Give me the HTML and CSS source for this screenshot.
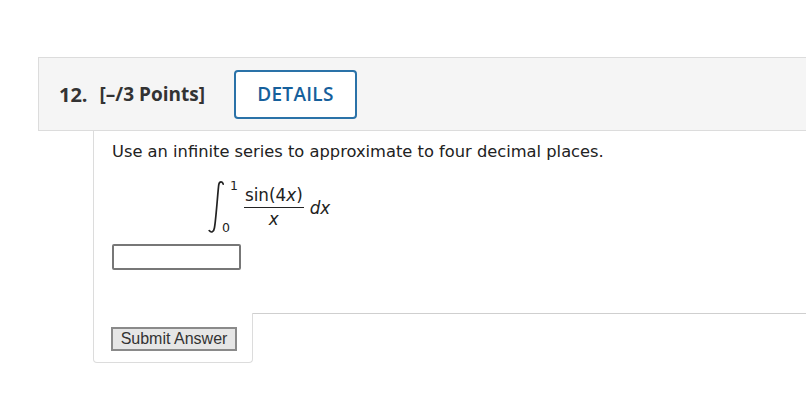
FILE: index.html
```html
<!DOCTYPE html>
<html>
<head>
<meta charset="utf-8">
<link rel="stylesheet" href="styles.css">
</head>
<body>
<div class="page">
  <div class="q-header">
    <span class="q-num">12.</span>
    <span class="q-points">[–/3 Points]</span>
    <button class="details">DETAILS</button>
  </div>
  <div class="q-body">
    <p class="prompt">Use an infinite series to approximate to four decimal places.</p>
    <div class="math">
      <svg class="intsign" width="16" height="54" viewBox="0 0 16 54"><path d="M15.2 4.2 C14.6 1.2 11.6 1 10.8 4.5 C10 9 8 40 6.4 48 C5.8 52 3.2 53.2 1.2 50.6" fill="none" stroke="#222" stroke-width="1.7" stroke-linecap="round"/></svg>
      <span class="limits"><span class="up">1</span><span class="lo">0</span></span>
      <span class="frac"><span class="num">sin(4<i>x</i>)</span><span class="den"><i>x</i></span></span>
      <span class="dx"><i>dx</i></span>
    </div>
    <input class="answer" type="text">
  </div>
  <div class="q-footer">
    <div class="submit-cell"><button class="submit">Submit Answer</button></div>
    <div class="footer-rest"></div>
  </div>
</div>
</body>
</html>
```
FILE: styles.css
```css
html, body { margin: 0; padding: 0; background: #fff; overflow: hidden; }
.page { padding-top: 57px; padding-left: 38px; }
.q-header {
  display: flex; align-items: center;
  height: 72px;
  background: #f5f5f5;
  border: 1px solid #dcdcdc; border-right: none;
  padding-left: 20px;
  font-family: "Open Sans", sans-serif; font-weight: 700; color: #333;
}
.q-num { font-size: 20px; }
.q-points { font-size: 19px; margin-left: 12px; }
.details {
  margin-left: 29px;
  width: 123px; height: 49px;
  background: #fff;
  border: 2px solid #2a72a8; border-radius: 4px;
  font-family: "Open Sans", sans-serif; font-weight: 600; font-size: 19px;
  color: #16609c; letter-spacing: 0.3px;
  padding: 0;
}
.q-body {
  margin-left: 55px;
  border-left: 1px solid #dcdcdc;
  padding: 11px 0 0 18px;
  height: 171px;
  font-family: "DejaVu Sans", Verdana, sans-serif; color: #222;
}
.prompt { margin: 0; font-size: 16.3px; line-height: 20px; }
.math {
  display: flex; align-items: center;
  margin: 17px 0 0 96px; height: 56px;
  font-size: 16.8px;
}
.intsign { display: block; }
.limits {
  display: flex; flex-direction: column; justify-content: space-between;
  height: 56px; font-size: 12.5px; line-height: 14px; margin-left: -2px;
}
.limits .up { margin-left: 8px; }
.limits .lo { margin-left: 0; }
.frac { display: inline-flex; flex-direction: column; align-items: center; margin-left: 6px; }
.frac .num { padding: 0 1px 2px; border-bottom: 1px solid #222; line-height: 20px; }
.frac .den { line-height: 22px; }
.dx { margin-left: 6px; margin-top: 2px; }
.answer {
  display: block; margin-top: 9px;
  width: 129px; height: 26px; box-sizing: border-box;
  border: 2px solid #777; border-radius: 2px; padding: 0;
}
.q-footer { display: flex; margin-left: 55px; }
.submit-cell {
  width: 141px; padding: 14px 0 11px 17px;
  border: 1px solid #dcdcdc; border-top: none;
  border-radius: 0 0 4px 4px;
}
.footer-rest { flex: 1; border-top: 1px solid #cfcfcf; }
.submit {
  display: block;
  width: 126px; height: 24px;
  background: #e6e6e6; border: 2px solid #8a8a8a; border-radius: 0;
  font-family: "Liberation Sans", Arial, sans-serif; font-size: 16px; color: #333;
  padding: 0; line-height: 20px;
}
```
